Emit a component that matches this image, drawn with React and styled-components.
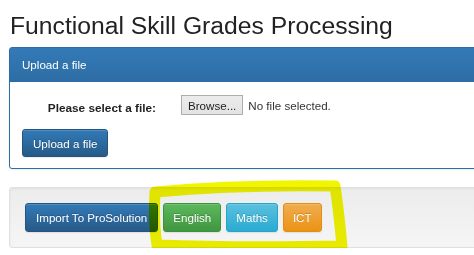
import styled, { createGlobalStyle } from 'styled-components'

const GlobalStyle = createGlobalStyle`
  html, body {
    margin: 0;
    padding: 0;
    background: #fff;
    overflow: hidden;
  }
  body {
    font-family: "Liberation Sans", Arial, sans-serif;
    color: #333;
  }
`

const Page = styled.div`
  position: relative;
  width: 620px;
  padding: 0 0 0 9px;
`

const Title = styled.h1`
  margin: 0;
  padding: 11px 0 0 1px;
  height: 47px;
  box-sizing: border-box;
  font-size: 24.7px;
  font-weight: 400;
  line-height: 30px;
  color: #222;
`

const Panel = styled.section`
  border: 1px solid #2e6da4;
  border-radius: 3px;
  background: #fff;
  box-shadow: 0 1px 2px rgba(0, 0, 0, 0.08);
`

const PanelHeading = styled.div`
  height: 34px;
  display: flex;
  align-items: center;
  padding: 0 12px 2px;
  box-sizing: border-box;
  background: linear-gradient(to bottom, #337ab7 0, #2e6da4 100%);
  color: #fff;
  font-size: 11.6px;
`

const PanelBody = styled.div`
  padding: 13px 12px 11px 12px;
  display: flex;
  flex-direction: column;
  align-items: flex-start;
  gap: 14px;
`

const FormRow = styled.div`
  display: flex;
  align-items: center;
`

const Label = styled.label`
  width: 134px;
  text-align: right;
  padding-right: 25px;
  padding-top: 6px;
  font-size: 11.8px;
  font-weight: 700;
  color: #222;
`

const Browse = styled.span`
  display: inline-flex;
  align-items: center;
  height: 20px;
  padding: 0 6px;
  box-sizing: border-box;
  border: 1px solid #adadad;
  background: linear-gradient(to bottom, #ececec, #e3e3e3);
  font-size: 11.6px;
  color: #222;
`

const FileName = styled.span`
  margin-left: 5px;
  font-size: 11.6px;
  color: #333;
`

const colors = {
  primary: ['#337ab7', '#265a88', '#245580'],
  success: ['#5cb85c', '#419641', '#3e8f3e'],
  info: ['#5bc0de', '#2aabd2', '#28a4c9'],
  warning: ['#f0ad4e', '#eb9316', '#e38d13'],
}

const Button = styled.button`
  height: ${(p) => p.$h || 29}px;
  padding: 0 ${(p) => p.$px || 10}px;
  border: 1px solid ${(p) => colors[p.$kind][2]};
  border-radius: 3px;
  background: linear-gradient(
    to bottom,
    ${(p) => colors[p.$kind][0]} 0,
    ${(p) => colors[p.$kind][1]} 100%
  );
  color: #fff;
  font-family: "Liberation Sans", Arial, sans-serif;
  font-size: 11.6px;
  text-shadow: 0 -1px 0 rgba(0, 0, 0, 0.2);
  box-shadow: inset 0 1px 0 rgba(255, 255, 255, 0.15), 0 1px 1px rgba(0, 0, 0, 0.075);
`

const Well = styled.div`
  margin-top: 18px;
  height: 61px;
  box-sizing: border-box;
  padding: 0 15px;
  display: flex;
  align-items: center;
  gap: 5px;
  border: 1px solid #e0e0e0;
  border-radius: 3px;
  background: linear-gradient(to bottom, #ececec 0, #f5f5f5 100%);
  box-shadow: inset 0 1px 3px rgba(0, 0, 0, 0.05), 0 1px 0 rgba(255, 255, 255, 0.1);
`

const Highlight = styled.svg`
  position: absolute;
  left: 0;
  top: 0;
  pointer-events: none;
  mix-blend-mode: multiply;
`

export default function App() {
  return (
    <>
      <GlobalStyle />
      <Page>
        <Title>Functional Skill Grades Processing</Title>
        <Panel>
          <PanelHeading>Upload a file</PanelHeading>
          <PanelBody>
            <FormRow>
              <Label>Please select a file:</Label>
              <Browse>Browse...</Browse>
              <FileName>No file selected.</FileName>
            </FormRow>
            <Button $kind="primary" $h={28}>Upload a file</Button>
          </PanelBody>
        </Panel>
        <Well>
          <Button $kind="primary">Import To ProSolution</Button>
          <Button $kind="success" $px={9}>English</Button>
          <Button $kind="info" $px={9}>Maths</Button>
          <Button $kind="warning" $px={9}>ICT</Button>
        </Well>
        <Highlight width="474" height="255" viewBox="0 0 474 255">
          <path
            d="M155 192 C210 187 280 185 335 186 C338 205 340 225 342 246 C290 247 210 247 157 245 C154 226 154 210 155 192"
            fill="none"
            stroke="#f2f500"
            strokeWidth="11"
            strokeLinejoin="round"
            strokeLinecap="round"
          />
        </Highlight>
      </Page>
    </>
  )
}
